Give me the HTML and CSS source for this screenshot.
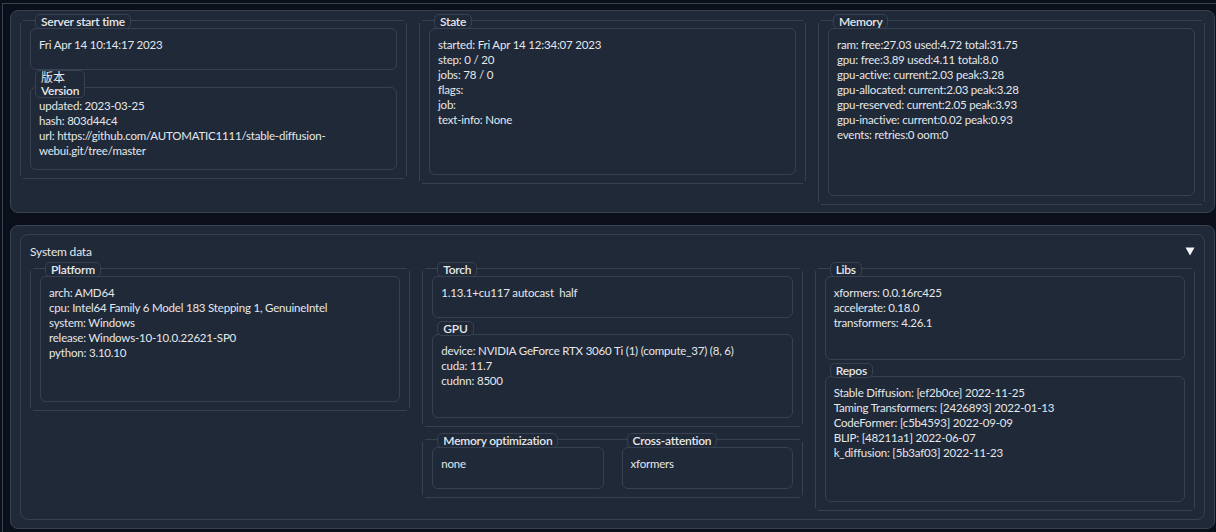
FILE: index.html
```html
<!DOCTYPE html>
<html lang="en">
<head>
<meta charset="utf-8">
<title>System info</title>
<link rel="stylesheet" href="styles.css">
</head>
<body>
<div class="frame">
  <div class="panel panel-top">
    <div class="cols">
      <div class="form">
        <div class="form-in">
          <div class="lbl">Server start time</div>
          <div class="box h42">Fri Apr 14 10:14:17 2023</div>
          <div class="lbl lbl-two"><span class="cjk">版本</span><br>Version</div>
          <div class="box box-after-two h83">updated: 2023-03-25<br>hash: 803d44c4<br>url: https://github.com/AUTOMATIC1111/stable-diffusion-<br>webui.git/tree/master</div>
        </div>
      </div>
      <div class="form">
        <div class="form-in">
          <div class="lbl">State</div>
          <div class="box h147">started: Fri Apr 14 12:34:07 2023<br>step: 0 / 20<br>jobs: 78 / 0<br>flags:<br>job:<br>text-info: None</div>
        </div>
      </div>
      <div class="form">
        <div class="form-in">
          <div class="lbl">Memory</div>
          <div class="box h168">ram: free:27.03 used:4.72 total:31.75<br>gpu: free:3.89 used:4.11 total:8.0<br>gpu-active: current:2.03 peak:3.28<br>gpu-allocated: current:2.03 peak:3.28<br>gpu-reserved: current:2.05 peak:3.93<br>gpu-inactive: current:0.02 peak:0.93<br>events: retries:0 oom:0</div>
        </div>
      </div>
    </div>
  </div>

  <div class="panel panel-bottom">
    <div class="accordion">
      <div class="acc-head">
        <span>System data</span>
        <svg class="caret" width="10" height="9" viewBox="0 0 10 9"><polygon points="0.5,0.5 9.5,0.5 5,8.5" fill="#f3f4f6"/></svg>
      </div>
      <div class="cols">
        <div class="col">
          <div class="form">
            <div class="form-in">
              <div class="lbl">Platform</div>
              <div class="box h126">arch: AMD64<br>cpu: Intel64 Family 6 Model 183 Stepping 1, GenuineIntel<br>system: Windows<br>release: Windows-10-10.0.22621-SP0<br>python: 3.10.10</div>
            </div>
          </div>
        </div>
        <div class="col">
          <div class="form">
            <div class="form-in">
              <div class="lbl">Torch</div>
              <div class="box h42 pre">1.13.1+cu117 autocast  half</div>
              <div class="lbl lbl-next">GPU</div>
              <div class="box box-tight h84">device: NVIDIA GeForce RTX 3060 Ti (1) (compute_37) (8, 6)<br>cuda: 11.7<br>cudnn: 8500</div>
            </div>
          </div>
          <div class="form form-gap">
            <div class="form-in form-row">
              <div class="cell">
                <div class="lbl">Memory optimization</div>
                <div class="box h42">none</div>
              </div>
              <div class="cell">
                <div class="lbl">Cross-attention</div>
                <div class="box h42">xformers</div>
              </div>
            </div>
          </div>
        </div>
        <div class="col">
          <div class="form">
            <div class="form-in">
              <div class="lbl">Libs</div>
              <div class="box h84">xformers: 0.0.16rc425<br>accelerate: 0.18.0<br>transformers: 4.26.1</div>
              <div class="lbl lbl-next">Repos</div>
              <div class="box box-tight h126">Stable Diffusion: [ef2b0ce] 2022-11-25<br>Taming Transformers: [2426893] 2022-01-13<br>CodeFormer: [c5b4593] 2022-09-09<br>BLIP: [48211a1] 2022-06-07<br>k_diffusion: [5b3af03] 2022-11-23</div>
            </div>
          </div>
        </div>
      </div>
    </div>
  </div>
</div>
</body>
</html>
```

FILE: styles.css
```css
* { box-sizing: border-box; }

html, body {
  margin: 0;
  background: #0b0f19;
}

body {
  font-family: Lato, "Noto Sans CJK SC", sans-serif;
  font-size: 11.5px;
  letter-spacing: -0.2px;
  line-height: 15px;
  color: #e5e7eb;
  overflow: hidden;
}

.frame {
  margin: 3px 0 0 2px;
  border-left: 1px solid #374151;
  border-top: 1px solid #374151;
  padding: 6px 1px 0 7px;
  height: 529px;
}

.panel {
  background: #1f2937;
  border: 1px solid #374151;
  border-radius: 8px;
}

.panel-top {
  padding: 9px 9px 7px;
}

.panel-bottom {
  margin-top: 12px;
  padding: 8px 9px;
}

.accordion {
  border: 1px solid #374151;
  border-radius: 8px;
  padding: 9px 9px 8px;
}

.acc-head {
  display: flex;
  justify-content: space-between;
  align-items: center;
  height: 15px;
  margin-bottom: 9px;
  font-size: 12px;
}

.caret {
  display: block;
}

.cols {
  display: flex;
  gap: 12px;
  align-items: flex-start;
}

.cols > * {
  flex: 1 1 0;
  min-width: 0;
}

.form {
  border-top: 1px solid #374151;
  border-bottom: 1px solid #374151;
  margin: 0 3px;
}

.form-gap {
  margin-top: 12px;
}

.form-in {
  display: flow-root;
  border-left: 1px solid #374151;
  border-right: 1px solid #374151;
  margin: 2px -3px;
  padding: 0 9px 6px;
}

.form-row {
  display: flex;
  gap: 18px;
}

.cell {
  flex: 1 1 0;
  min-width: 0;
  display: flow-root;
}

.lbl {
  position: relative;
  z-index: 1;
  width: fit-content;
  margin: -9px 0 0 5px;
  padding: 0 5px;
  border: 1px solid #374151;
  border-radius: 5px;
  background: #1f2937;
  font-size: 12px;
  font-weight: 600;
  letter-spacing: -0.25px;
  line-height: 13px;
  color: #e5e7eb;
}

.cjk {
  font-weight: 400;
  letter-spacing: 0;
}

.lbl-two {
  margin-top: 0;
  line-height: 13px;
}

.lbl-next {
  margin-top: 3px;
}

.box {
  margin-top: -1px;
  border: 1px solid #374151;
  border-radius: 6px;
  padding: 8px;
  background: #1f2937;
}

.box-after-two {
  margin-top: -11px;
  padding-top: 10px;
}

.box-tight {
  margin-top: -2px;
}

.pre { white-space: pre; }

.h42 { height: 42px; }
.h83 { height: 83px; }
.h84 { height: 84px; }
.h126 { height: 126px; }
.h147 { height: 147px; }
.h168 { height: 168px; }
```
